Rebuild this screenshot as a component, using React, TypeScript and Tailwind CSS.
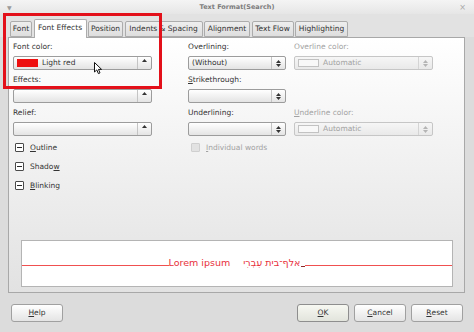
import React from 'react'

const Arrow = ({ up, dim }: { up: boolean; dim?: boolean }) => (
  <svg width="5" height="3" viewBox="0 0 5 3" className="block">
    <path d={up ? 'M0 3 L2.5 0 L5 3 Z' : 'M0 0 L2.5 3 L5 0 Z'} fill={dim ? '#b4b4b4' : '#333333'} />
  </svg>
)

const Combo = ({ children, both, disabled, single }: { children?: React.ReactNode; both?: boolean; disabled?: boolean; single?: boolean }) => (
  <div
    className={`h-[14px] flex items-stretch border rounded-[2px] bg-linear-to-b ${
      disabled ? 'border-[#c6c6c6] from-[#f6f6f6] to-[#e9e9e9]' : 'border-[#9c9c9c] from-white to-[#e4e4e4]'
    }`}
  >
    <div className="flex-1 flex items-center min-w-0 pl-[2px]">{children}</div>
    <div
      className={`w-[14px] border-l flex flex-col items-center gap-[1px] ${
        disabled ? 'border-[#d4d4d4]' : 'border-[#c4c4c4]'
      } ${single ? 'justify-start pt-[2px]' : 'justify-center'}`}
    >
      <Arrow up dim={disabled} />
      {both && <Arrow up={false} dim={disabled} />}
    </div>
  </div>
)

const Label = ({ children, dim }: { children: React.ReactNode; dim?: boolean }) => (
  <div className={`h-[15px] flex items-center ${dim ? 'text-[#a2a2a2]' : 'text-[#333]'}`}>{children}</div>
)

const Field = ({ label, dim, children }: { label: React.ReactNode; dim?: boolean; children: React.ReactNode }) => (
  <div className="mb-[2px]">
    <Label dim={dim}>{label}</Label>
    <div className="mt-[2px]">{children}</div>
  </div>
)

const TriBox = ({ children }: { children: React.ReactNode }) => (
  <div className="h-[19px] flex items-center pl-[2px]">
    <div className="w-[9px] h-[9px] border border-[#4a4a4a] rounded-[1px] bg-white flex items-center justify-center">
      <div className="w-[5px] h-[1.5px] bg-[#2a2a2a]"></div>
    </div>
    <span className="ml-[6px] text-[#333]">{children}</span>
  </div>
)

const Btn = ({ children, def }: { children: React.ReactNode; def?: boolean }) => (
  <div
    className={`w-[52px] h-[18px] flex items-center justify-center rounded-[3px] border bg-linear-to-b text-[#333] ${
      def ? 'border-[#8e8e8e] from-[#f7f8f2] to-[#e2e4dc]' : 'border-[#a0a0a0] from-white to-[#e4e4e4]'
    }`}
  >
    {children}
  </div>
)

const Swatch = ({ color }: { color?: string }) => (
  <div
    className={`w-[21px] h-[8px] ${color ? '' : 'border border-[#c2c2c2] bg-[#f8f8f8]'}`}
    style={color ? { background: color } : undefined}
  ></div>
)

const tabs = [
  { name: 'Font', w: 'w-[22px]' },
  { name: 'Font Effects', w: 'w-[53px]', active: true },
  { name: 'Position', w: 'w-[35px]' },
  { name: 'Indents & Spacing', w: 'w-[78px]' },
  { name: 'Alignment', w: 'w-[46px]' },
  { name: 'Text Flow', w: 'w-[42px]' },
  { name: 'Highlighting', w: 'w-[53px]' },
]

export default function App() {
  return (
    <div className="w-[474px] h-[332px] relative overflow-hidden bg-[#dcdcdc] font-['DejaVu_Sans',sans-serif] text-[7.5px] text-[#333]">
      {/* title bar */}
      <div className="h-[14px] pt-[2px] relative flex items-center justify-center bg-linear-to-b from-[#f4f4f4] to-[#e6e6e6]">
        <span className="absolute left-[7px] top-[3px] text-[6px] text-[#9a9a9a]">▼</span>
        <span className="font-bold text-[6.5px] text-[#7c7c7c]">Text Format(Search)</span>
        <span className="absolute right-[8px] top-[2px] text-[8px] text-[#a8a8a8]">×</span>
      </div>

      {/* tabs */}
      <div className="h-[23px] pl-[10px] flex items-end gap-[1.5px] bg-[#e2e2e2]">
        {tabs.map(t => (
          <div
            key={t.name}
            className={`${t.w} flex items-center justify-center rounded-t-[2px] border border-[#acacac] whitespace-nowrap ${
              t.active ? 'h-[19px] bg-white border-b-0 -mb-px relative z-10 pb-[2px]' : 'h-[16px] bg-linear-to-b from-[#eeeeee] to-[#dedede]'
            }`}
          >
            {t.name}
          </div>
        ))}
      </div>

      {/* tab page */}
      <div className="ml-[8px] w-[457px] h-[256px] border border-[#a8a8a8] bg-linear-to-b from-white to-[#e2e2e2] flex flex-col">
        <div className="flex pl-[4px] pt-[1px]">
          <div className="w-[139px] mr-[36px]">
            <Field label="Font color:">
              <Combo single>
                <div className="pl-[1px] flex items-center">
                  <Swatch color="#ee1010" />
                  <span className="ml-[4px]">Light red</span>
                </div>
              </Combo>
            </Field>
            <Field label="Effects:">
              <Combo single />
            </Field>
            <Field label="Relief:">
              <Combo single />
            </Field>
            <TriBox>
              <span className="underline">O</span>utline
            </TriBox>
            <TriBox>
              Shado<span className="underline">w</span>
            </TriBox>
            <TriBox>
              <span className="underline">B</span>linking
            </TriBox>
          </div>

          <div className="w-[98px] mr-[8px]">
            <Field label="Overlining:">
              <Combo both>
                <span className="pl-[1px]">(Without)</span>
              </Combo>
            </Field>
            <Field
              label={
                <>
                  <span className="underline">S</span>trikethrough:
                </>
              }
            >
              <Combo both />
            </Field>
            <Field label="Underlining:">
              <Combo both />
            </Field>
            <div className="h-[19px] flex items-center pl-[3px]">
              <div className="w-[9px] h-[9px] border border-[#cfcfcf] rounded-[1px] bg-[#e2e2e2]"></div>
              <span className="ml-[6px] text-[#a2a2a2]">
                <span className="underline">I</span>ndividual words
              </span>
            </div>
          </div>

          <div className="w-[139px]">
            <Field label="Overline color:" dim>
              <Combo both disabled>
                <div className="pl-[1px] flex items-center text-[#a2a2a2]">
                  <Swatch />
                  <span className="ml-[4px]">Automatic</span>
                </div>
              </Combo>
            </Field>
            <div className="h-[33px]"></div>
            <Field
              dim
              label={
                <>
                  <span className="underline">U</span>nderline color:
                </>
              }
            >
              <Combo both disabled>
                <div className="pl-[1px] flex items-center text-[#a2a2a2]">
                  <Swatch />
                  <span className="ml-[4px]">Automatic</span>
                </div>
              </Combo>
            </Field>
          </div>
        </div>

        {/* preview */}
        <div className="mt-auto mb-[5px] ml-[12px] w-[432px] h-[47px] border border-[#b4b4b4] bg-white">
          <div className="pt-[17px] flex items-end text-[9.5px] leading-none text-[#e8303a]">
            <div className="flex-1 h-[1px] mb-[2px] bg-[#f05050]"></div>
            <span>Lorem ipsum</span>
            <span className="ml-[13px]" dir="rtl">אלף־בית עִבְרִי</span>
            <div className="w-[4px] h-[1px] mb-[1px] ml-[1px] bg-[#8a2a2a]"></div>
            <div className="flex-1 h-[1px] mb-[2px] bg-[#f05050]"></div>
          </div>
        </div>
      </div>

      {/* buttons */}
      <div className="mt-[11px] flex">
        <div className="ml-[11px]">
          <Btn>
            <span className="underline">H</span>elp
          </Btn>
        </div>
        <div className="ml-auto mr-[11px] flex gap-[5px]">
          <Btn def>
            <span className="underline">O</span>K
          </Btn>
          <Btn>
            <span className="underline">C</span>ancel
          </Btn>
          <Btn>
            <span className="underline">R</span>eset
          </Btn>
        </div>
      </div>

      {/* annotation rectangle */}
      <div className="absolute left-[3px] top-[13px] w-[159px] h-[76px] border-[3px] border-[#e3101a] pointer-events-none"></div>

      {/* mouse pointer */}
      <svg className="absolute left-[94px] top-[62px]" width="9" height="13" viewBox="0 0 9 13">
        <path d="M0.5 0.5 L0.5 10 L2.8 7.9 L4.4 11.6 L6 10.9 L4.5 7.4 L7.6 7.4 Z" fill="#ffffff" stroke="#111111" strokeWidth="1" strokeLinejoin="round" />
      </svg>
    </div>
  )
}
